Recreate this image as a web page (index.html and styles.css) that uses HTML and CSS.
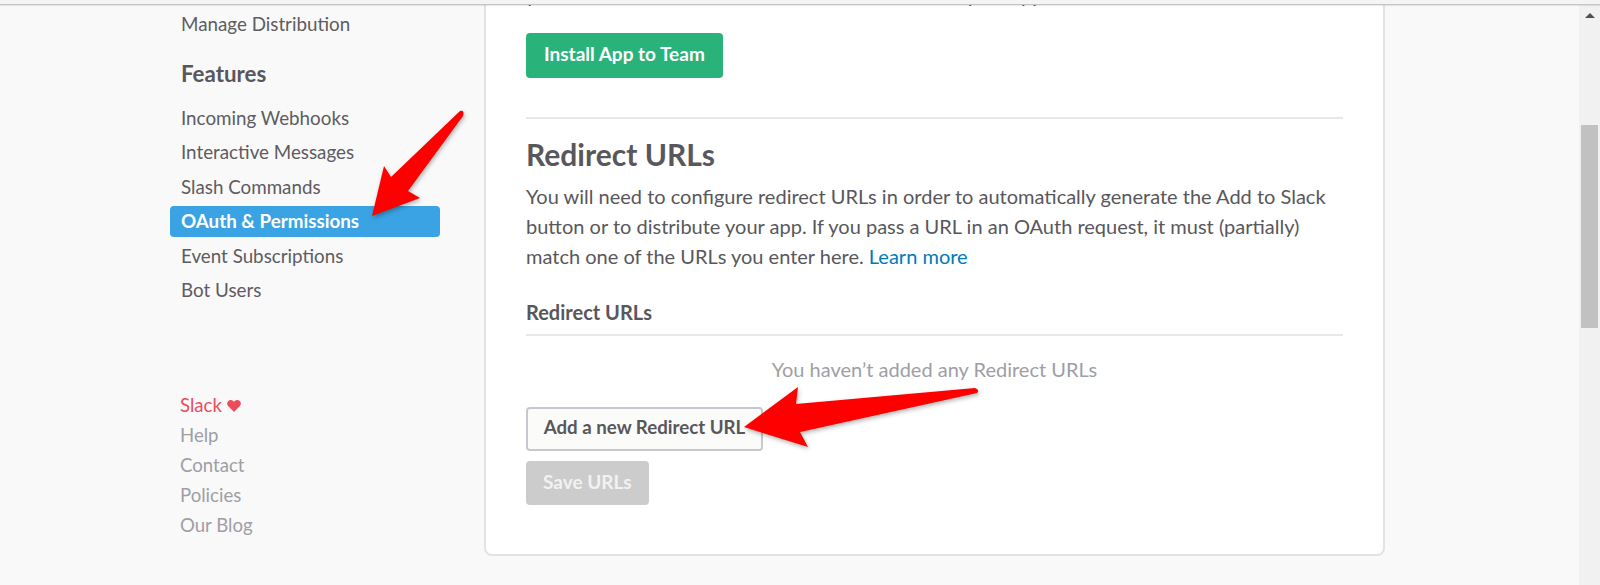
FILE: index.html
```html
<!DOCTYPE html>
<html lang="en">
<head>
  <meta charset="UTF-8" />
  <title>OAuth &amp; Permissions</title>
  <link rel="stylesheet" href="styles.css">
</head>
<body>
  <div class="topbar"></div>

  <div class="window">
    <div class="page">
      <nav class="sidebar">
        <ul class="nav-list nav-first">
          <li><a href="#">Manage Distribution</a></li>
        </ul>
        <h3 class="nav-title">Features</h3>
        <ul class="nav-list">
          <li><a href="#">Incoming Webhooks</a></li>
          <li><a href="#">Interactive Messages</a></li>
          <li><a href="#">Slash Commands</a></li>
          <li><a href="#" class="active">OAuth &amp; Permissions</a></li>
          <li><a href="#">Event Subscriptions</a></li>
          <li><a href="#">Bot Users</a></li>
        </ul>
        <ul class="foot-list">
          <li><a href="#" class="slack">Slack
            <svg class="heart" viewBox="0 0 16 14" width="14" height="12"><path d="M8 14 1.400 7.400C-.5 5.500-.4 2.600 1.300 1.100 3-.4 5.700-.3 7.200 1.300L8 2.200l.8-.9C10.300-.3 13-.4 14.700 1.100c1.700 1.500 1.800 4.400-.1 6.300z"/></svg>
          </a></li>
          <li><a href="#">Help</a></li>
          <li><a href="#">Contact</a></li>
          <li><a href="#">Policies</a></li>
          <li><a href="#">Our Blog</a></li>
        </ul>
      </nav>

      <main class="card">
        <p class="cut-line">you can install it on a team to test what it does on your app.</p>
        <button class="btn btn-green">Install App to Team</button>
        <hr class="rule">
        <h2>Redirect URLs</h2>
        <p class="intro">You will need to configure redirect URLs in order to automatically generate the Add to Slack button or to distribute your app. If you pass a URL in an OAuth request, it must (partially) match one of the URLs you enter here. <a href="#">Learn more</a></p>
        <h4 class="sub-title">Redirect URLs</h4>
        <p class="empty">You haven’t added any Redirect URLs</p>
        <div class="actions">
          <button class="btn btn-outline">Add a new Redirect URL</button>
          <button class="btn btn-disabled">Save URLs</button>
        </div>
      </main>
    </div>

    <div class="scrollbar">
      <span class="scroll-up"></span>
      <span class="scroll-thumb"></span>
    </div>
  </div>

  <!-- red annotation arrows drawn on top of the screenshot -->
  <svg class="arrows" viewBox="0 0 1600 585" width="1600" height="585">
    <path d="M372 216 384 166 391 177 460 111Q465 110 463 116L408 191 420 198Z"/>
    <path d="M744 427 798 387 796 404 975 388Q980 390 977 393L800 432 808 447Z"/>
  </svg>
</body>
</html>
```

FILE: styles.css
```css
* { box-sizing: border-box; }

html, body {
  height: 585px;
  overflow: hidden;
}

body {
  margin: 0;
  font-family: 'Lato', 'Liberation Sans', sans-serif;
  background-color: #f9f9f9;
  color: #58575c;
}

.topbar {
  height: 5px;
  background-color: #f4f4f4;
  border-bottom: 1px solid #c4c4c4;
  box-shadow: 0 1px 1px rgba(0,0,0,0.08);
  position: relative;
  z-index: 1;
}

.window {
  display: flex;
  height: 580px;
}

.page {
  flex-grow: 1;
  display: flex;
  padding-left: 170px;
  overflow: hidden;
}

.sidebar {
  width: 270px;
  margin-right: 44px;
  flex-shrink: 0;
}

.nav-list, .foot-list {
  list-style-type: none;
  margin: 0;
  padding: 0;
}

.nav-first {
  margin-top: 2px;
}

.nav-list a {
  display: block;
  height: 34.4px;
  line-height: 34px;
  padding-left: 11px;
  font-size: 18.8px;
  color: #5d5c61;
  text-decoration: none;
  border-radius: 4px;
}

.nav-list a.active {
  height: 31px;
  margin: 2px 0;
  line-height: 30px;
  background-color: #3aa3e3;
  color: white;
  font-weight: 700;
}

.nav-title {
  margin: 18px 0 11.5px 11px;
  font-size: 22.3px;
  line-height: 30px;
  font-weight: 700;
}

.foot-list {
  margin-top: 82.5px;
  padding-left: 10px;
  font-size: 18.6px;
  line-height: 30px;
}

.foot-list a {
  color: #9e9ea6;
  text-decoration: none;
}

.foot-list a.slack {
  color: #eb4d5c;
}

.heart {
  fill: #eb4d5c;
}

.card {
  width: 901px;
  height: 551px;
  padding: 0 40px;
  background: white;
  border: 2px solid #e3e3e3;
  border-top: none;
  border-radius: 0 0 8px 8px;
}

.cut-line {
  margin: -24px 0 0;
  height: 28px;
  font-size: 20px;
  line-height: 28px;
  white-space: nowrap;
}

.btn {
  display: block;
  font-family: inherit;
  font-size: 19px;
  font-weight: 700;
  border-radius: 4px;
  padding: 0 18px 4px;
  cursor: pointer;
}

.btn-green {
  margin-top: 24px;
  height: 45px;
  background-color: #2ab27b;
  border: none;
  color: white;
}

.rule {
  margin: 39px 0 0;
  border: none;
  border-top: 2px solid #e8e8e8;
}

h2 {
  margin: 15px 0 0;
  font-size: 30px;
  line-height: 40px;
  font-weight: 700;
}

.intro {
  margin: 7px 0 0;
  font-size: 20px;
  line-height: 30px;
}

.intro a {
  color: #007ab8;
  text-decoration: none;
}

.sub-title {
  margin: 28px 0 0;
  padding-bottom: 9px;
  font-size: 20px;
  line-height: 26px;
  font-weight: 700;
  border-bottom: 2px solid #e8e8e8;
}

.empty {
  margin: 18px 0 0;
  text-align: center;
  font-size: 20px;
  line-height: 30px;
  color: #9e9ea6;
}

.actions {
  margin-top: 23px;
  display: flex;
  flex-direction: column;
  align-items: flex-start;
  gap: 10px;
}

.btn-outline {
  height: 44px;
  width: 237px;
  padding: 0 0 4px;
  font-size: 18.7px;
  background-color: #fbfbfa;
  border: 2px solid #c5c9cf;
  color: #58575c;
}

.btn-disabled {
  height: 44px;
  padding: 0 17px 4px;
  background-color: #cbcccb;
  border: none;
  color: #f2f2f2;
}

.scrollbar {
  width: 21px;
  flex-shrink: 0;
  background-color: #f1f1f1;
  padding: 0 2px;
}

.scroll-up {
  display: block;
  width: 0;
  margin: 8px auto 0;
  border-left: 5px solid transparent;
  border-right: 5px solid transparent;
  border-bottom: 5px solid #505050;
}

.scroll-thumb {
  display: block;
  height: 203px;
  margin-top: 107px;
  background-color: #c1c1c1;
}

.arrows {
  position: absolute;
  top: 0;
  left: 0;
  pointer-events: none;
  fill: #fe0000;
  filter: drop-shadow(1px 2px 2px rgba(0,0,0,0.3));
}
```
